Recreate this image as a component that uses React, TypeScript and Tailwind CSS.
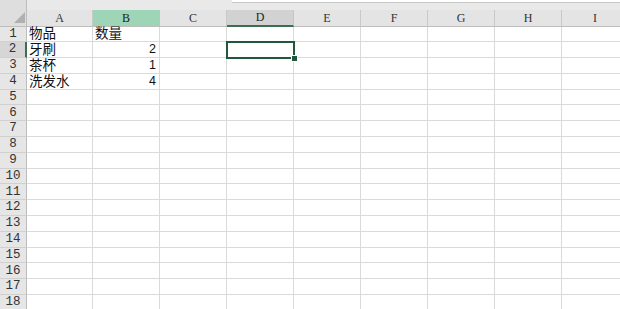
const cols = ["A", "B", "C", "D", "E", "F", "G", "H", "I"];

const data: Record<number, { a?: string; b?: string; num?: boolean }> = {
  1: { a: "物品", b: "数量" },
  2: { a: "牙刷", b: "2", num: true },
  3: { a: "茶杯", b: "1", num: true },
  4: { a: "洗发水", b: "4", num: true },
};

const rows = Array.from({ length: 18 }, (_, i) => i + 1);

const cjk = "font-['Liberation_Sans','Noto_Sans_CJK_SC',sans-serif]";

export default function App() {
  return (
    <div className="relative w-[620px] h-[309px] overflow-hidden bg-white select-none">
      {/* top: corner + formula bar remnant + column headers */}
      <div className="grid grid-cols-[27px_66px_repeat(8,67px)] grid-rows-[10px_16.5px] bg-[#e4e4e4]">
        <div className="row-span-2 relative bg-[#dedede] border-r border-b border-[#bdbdbd]">
          <svg className="absolute left-[14px] top-[12px]" width="11" height="11" viewBox="0 0 11 11">
            <polygon points="11,0 11,11 0,11" fill="#b0b0b0" />
          </svg>
        </div>
        <div className="col-span-9 flex bg-[#e9e9e9]">
          <div className="w-[205px]" />
          <div className="flex-1 h-[3px] bg-white border-b border-[#c8c8c8]" />
        </div>
        {cols.map((c) => (
          <div
            key={c}
            className={
              "flex items-center justify-center text-[12px] leading-none font-['Liberation_Serif',serif] border-r " +
              (c === "B"
                ? "bg-[#9fd5b7] text-[#222] border-[#9fd5b7] border-b border-b-[#bdbdbd]"
                : c === "D"
                ? "bg-[#d2d2d2] text-[#222] border-[#c4c4c4] border-b-2 border-b-[#3d6e51]"
                : "text-[#333] border-[#c9c9c9] border-b border-b-[#bdbdbd]")
            }
          >
            {c}
          </div>
        ))}
      </div>

      {/* rows */}
      {rows.map((r) => {
        const d = data[r] || {};
        return (
          <div key={r} className="grid grid-cols-[27px_66px_repeat(8,67px)] h-[15.8px]">
            <div
              className={
                "flex items-center justify-center text-[12.5px] leading-none font-['Liberation_Mono',monospace] text-[#333] border-b border-[#d0d0d0] " +
                (r === 2
                  ? "bg-[#d6d6d6] border-r-2 border-r-[#3d6e51]"
                  : "bg-[#e6e6e6] border-r border-r-[#bdbdbd]")
              }
            >
              {r}
            </div>
            {cols.map((c) => {
              let text = "";
              if (c === "A") text = d.a || "";
              if (c === "B") text = d.b || "";
              const right = c === "B" && d.num;
              return (
                <div
                  key={c}
                  className={
                    "flex items-center border-r border-b border-[#dadada] overflow-visible whitespace-nowrap text-[#111] leading-none " +
                    cjk +
                    (right ? " justify-end pr-[3px] text-[12.5px]" : " pl-[2px] text-[13.5px]")
                  }
                >
                  {text}
                </div>
              );
            })}
          </div>
        );
      })}

      {/* active cell D2 */}
      <div className="absolute left-[226px] top-[41px] w-[69px] h-[18px] border-2 border-[#21573a]" />
      <div className="absolute left-[291px] top-[55px] w-[7px] h-[7px] bg-[#21573a] border border-white" />
    </div>
  );
}
